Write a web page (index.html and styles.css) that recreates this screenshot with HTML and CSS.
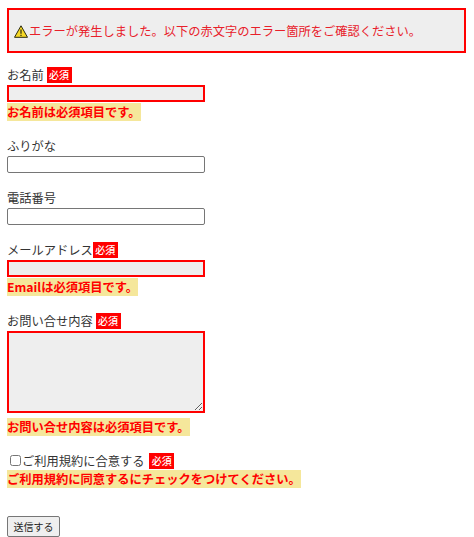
FILE: index.html
```html
<!DOCTYPE html>
<html lang="ja">

<head>
    <meta charset="UTF-8" />
    <meta name="viewport" content="width=device-width, initial-scale=1.0" />
    <title>お問い合せ</title>
    <link rel="stylesheet" href="styles.css">
</head>

<body>
    <div class="alert">
        <svg class="alert-icon" viewBox="0 0 14 13" width="14" height="13">
            <path d="M7 0.8 L13.5 12.3 L0.5 12.3 Z" fill="#f7d925" stroke="#2a2a10" stroke-width="1" stroke-linejoin="round" />
            <path d="M7 4.6 L7 8.8" stroke="#2a2a10" stroke-width="1.2" />
            <path d="M7 9.7 L7 11" stroke="#2a2a10" stroke-width="1.2" />
        </svg>
        <span>エラーが発生しました。以下の赤文字のエラー箇所をご確認ください。</span>
    </div>

    <form class="form">
        <div class="field">
            <div class="label">お名前 <span class="required">必須</span></div>
            <input class="text-input has-error" type="text">
            <div><span class="error">お名前は必須項目です。</span></div>
        </div>

        <div class="field">
            <div class="label">ふりがな</div>
            <input class="text-input" type="text">
        </div>

        <div class="field">
            <div class="label">電話番号</div>
            <input class="text-input" type="text">
        </div>

        <div class="field">
            <div class="label">メールアドレス<span class="required">必須</span></div>
            <input class="text-input has-error" type="text">
            <div><span class="error">Emailは必須項目です。</span></div>
        </div>

        <div class="field">
            <div class="label">お問い合せ内容 <span class="required">必須</span></div>
            <textarea class="text-area has-error"></textarea>
            <div class="area-error"><span class="error">お問い合せ内容は必須項目です。</span></div>
        </div>

        <div class="field agree">
            <div class="label">
                <input class="check" type="checkbox">ご利用規約に合意する <span class="required">必須</span>
            </div>
            <div><span class="error">ご利用規約に同意するにチェックをつけてください。</span></div>
        </div>

        <button class="submit" type="button">送信する</button>
    </form>
</body>

</html>
```

FILE: styles.css
```css
* {
    box-sizing: border-box;
}

body {
    margin: 8px 7px 0;
    font-family: "Noto Sans CJK JP", "Liberation Sans", sans-serif;
    font-size: 12.25px;
    color: #333;
    background: #fff;
    overflow: hidden;
}

.alert {
    display: flex;
    align-items: center;
    gap: 1px;
    width: 459px;
    height: 45px;
    padding: 0 5px;
    background: #eee;
    border: 2px solid #f00;
    color: #e8202a;
}

.alert-icon {
    flex: none;
    margin-top: 2px;
}

.form {
    margin-top: 13px;
}

.field {
    margin-bottom: 16px;
}

.label {
    display: flex;
    align-items: center;
    height: 17px;
    margin-bottom: 2px;
    white-space: pre;
}

.required {
    display: inline-block;
    width: 25px;
    height: 16px;
    background: #f00;
    color: #fff;
    font-size: 10px;
    font-weight: 500;
    line-height: 16px;
    text-align: center;
}

.text-input,
.text-area {
    display: block;
    width: 198px;
    margin: 0;
    background: #fff;
    border: 1px solid #767676;
    border-radius: 2px;
}

.text-input {
    height: 17px;
}

.text-area {
    height: 82px;
}

.has-error {
    background: #eee;
    border: 2px solid #f00;
    border-radius: 0;
}

.error {
    display: inline-block;
    height: 18px;
    margin-top: 1px;
    background: #f5e79b;
    color: #f00;
    font-weight: bold;
    line-height: 18px;
}

.area-error {
    margin-top: 4px;
}

.agree {
    margin-bottom: 28px;
}

.agree .label {
    margin-bottom: 0;
}

.agree .required {
    margin-left: 2px;
}

.check {
    width: 11px;
    height: 11px;
    margin: 0 1px 0 3px;
}

.submit {
    display: block;
    width: 53px;
    height: 21px;
    padding: 0;
    background: #efefef;
    border: 1px solid #767676;
    border-radius: 2px;
    color: #222;
    font-family: inherit;
    font-size: 10px;
}
```
